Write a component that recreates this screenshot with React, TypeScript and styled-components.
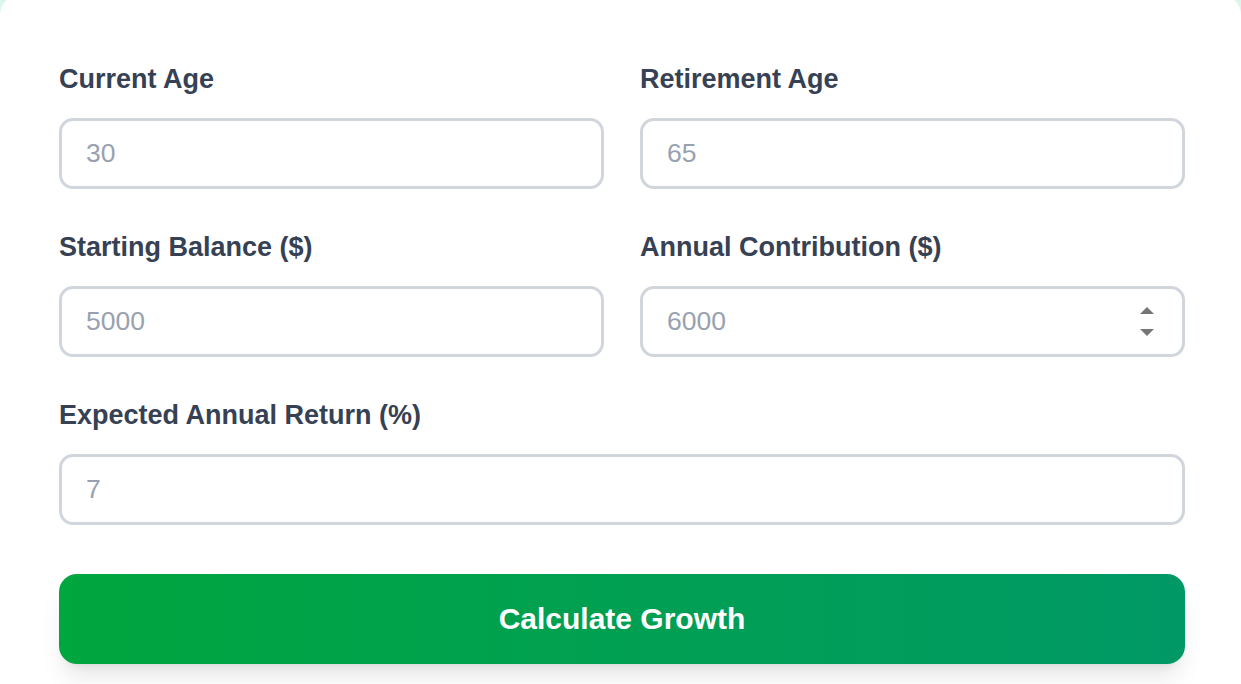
import React from "react";
import styled, { createGlobalStyle } from "styled-components";

const Global = createGlobalStyle`
  html, body { margin: 0; padding: 0; }
  body {
    background: #dcf6eb;
    font-family: "Liberation Sans", Arial, sans-serif;
    overflow: hidden;
  }
  * { box-sizing: border-box; }
`;

const Card = styled.div`
  margin-top: -5px;
  background: #ffffff;
  border-radius: 20px;
  padding: 64px 56px 60px 59px;
`;

const Grid = styled.div`
  display: grid;
  grid-template-columns: 545px 545px;
  column-gap: 36px;
  row-gap: 38px;
`;

const Field = styled.div<{ $full?: boolean }>`
  display: flex;
  flex-direction: column;
  gap: 19px;
  grid-column: ${(p) => (p.$full ? "1 / -1" : "auto")};
`;

const Label = styled.label`
  font-size: 27px;
  line-height: 40px;
  font-weight: 700;
  color: #364153;
`;

const InputWrap = styled.div`
  position: relative;
`;

const Input = styled.input`
  width: 100%;
  height: 71px;
  border: 3px solid #d1d5dc;
  border-radius: 14px;
  padding: 0 24px;
  font-family: "Liberation Sans", Arial, sans-serif;
  font-size: 26.5px;
  color: #1f2937;
  background: #fff;
  outline: none;
  &::placeholder { color: #99a1af; }
`;

const Spinner = styled.svg`
  position: absolute;
  right: 31px;
  top: 50%;
  transform: translateY(-50%);
  pointer-events: none;
`;

const Button = styled.button`
  display: block;
  margin-top: 49px;
  width: 1126px;
  height: 90px;
  border: none;
  border-radius: 18px;
  background: linear-gradient(90deg, #00a63e 0%, #009966 100%);
  color: #ffffff;
  font-family: "Liberation Sans", Arial, sans-serif;
  font-size: 30px;
  font-weight: 700;
  box-shadow: 0 17px 25px -5px rgba(0, 0, 0, 0.1), 0 7px 10px -7px rgba(0, 0, 0, 0.1);
  cursor: pointer;
`;

type F = { label: string; ph: string; full?: boolean; spin?: boolean };

const fields: F[] = [
  { label: "Current Age", ph: "30" },
  { label: "Retirement Age", ph: "65" },
  { label: "Starting Balance ($)", ph: "5000" },
  { label: "Annual Contribution ($)", ph: "6000", spin: true },
  { label: "Expected Annual Return (%)", ph: "7", full: true },
];

export default function App() {
  return (
    <>
      <Global />
      <Card>
        <Grid>
          {fields.map((f) => (
            <Field key={f.label} $full={f.full}>
              <Label>{f.label}</Label>
              <InputWrap>
                <Input type="text" placeholder={f.ph} />
                {f.spin && (
                  <Spinner width="14" height="30" viewBox="0 0 14 30">
                    <polygon points="7,0 14,7 0,7" fill="#767676" />
                    <polygon points="0,22 14,22 7,29" fill="#767676" />
                  </Spinner>
                )}
              </InputWrap>
            </Field>
          ))}
        </Grid>
        <Button>Calculate Growth</Button>
      </Card>
    </>
  );
}
